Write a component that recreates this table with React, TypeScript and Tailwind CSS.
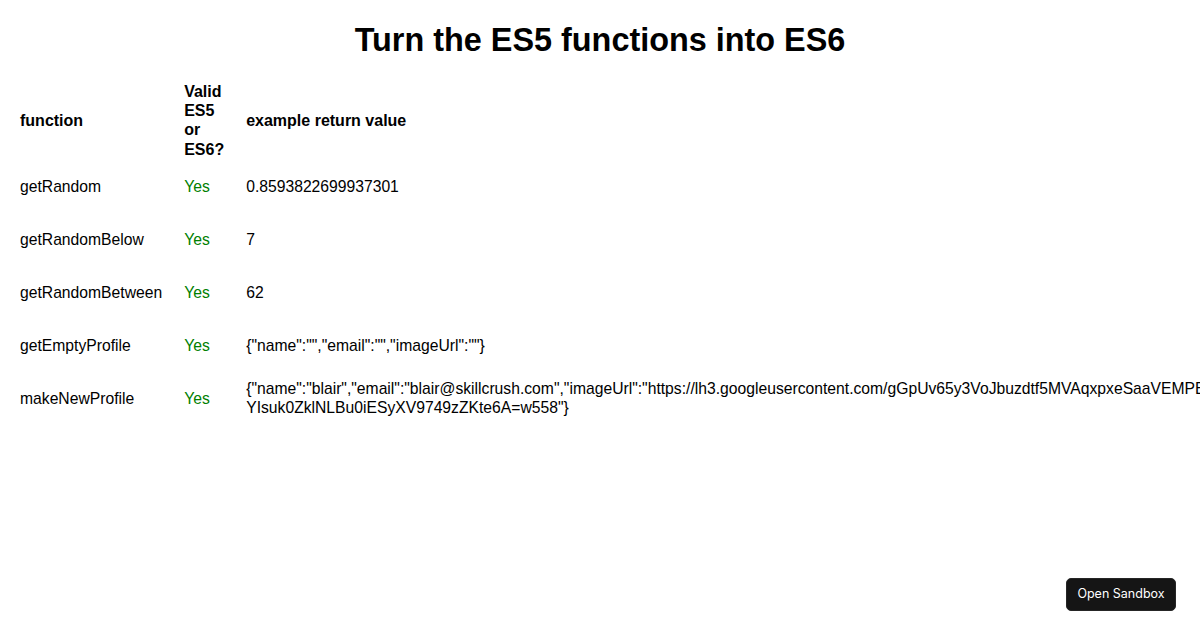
const rows = [
  { name: 'getRandom', value: ['0.8593822699937301'] },
  { name: 'getRandomBelow', value: ['7'] },
  { name: 'getRandomBetween', value: ['62'] },
  { name: 'getEmptyProfile', value: ['{"name":"","email":"","imageUrl":""}'] },
  {
    name: 'makeNewProfile',
    value: [
      '{"name":"blair","email":"blair@skillcrush.com","imageUrl":"https://lh3.googleusercontent.com/gGpUv65y3VoJbuzdtf5MVAqxpxeSaaVEMPEtZrfEV0Gk6kG0xU7q2DBRq8-',
      'YIsuk0ZklNLBu0iESyXV9749zZKte6A=w558"}',
    ],
  },
]

export default function App() {
  return (
    <div className="relative w-[1200px] h-[630px] overflow-hidden bg-white text-black font-['Liberation_Sans',Arial,sans-serif]">
      <div className="px-2">
        <h1 className="mt-[22px] mb-[21px] text-[32.4px] leading-[37px] font-bold text-center">
          Turn the ES5 functions into ES6
        </h1>

        <table className="border-separate border-spacing-[2px] text-[15.7px] leading-[19px]">
          <thead>
            <tr>
              <th className="px-[10px] py-0 text-left align-middle font-bold text-[16px] leading-[19.2px]">function</th>
              <th className="px-[10px] py-0 text-left align-middle font-bold text-[16px] leading-[19.2px]">Valid ES5 or ES6?</th>
              <th className="px-[10px] py-0 text-left align-middle font-bold text-[16px] leading-[19.2px]">example return value</th>
            </tr>
          </thead>
          <tbody>
            {rows.map((r) => (
              <tr key={r.name}>
                <td className="h-[51px] px-[10px] py-0 align-middle">{r.name}</td>
                <td className="h-[51px] px-[10px] py-0 align-middle text-[#008000]">Yes</td>
                <td className="h-[51px] px-[10px] py-0 align-middle whitespace-nowrap">
                  {r.value.map((line, i) => (
                    <div key={i}>{line}</div>
                  ))}
                </td>
              </tr>
            ))}
          </tbody>
        </table>
      </div>

      {/* floating sandbox button */}
      <button className="absolute left-[1066px] top-[578px] w-[110px] h-[33px] flex items-center justify-center rounded-[5px] bg-[#151515] border border-[#262626] text-white text-[12.5px] font-['Inter',sans-serif]">
        Open Sandbox
      </button>
    </div>
  )
}
